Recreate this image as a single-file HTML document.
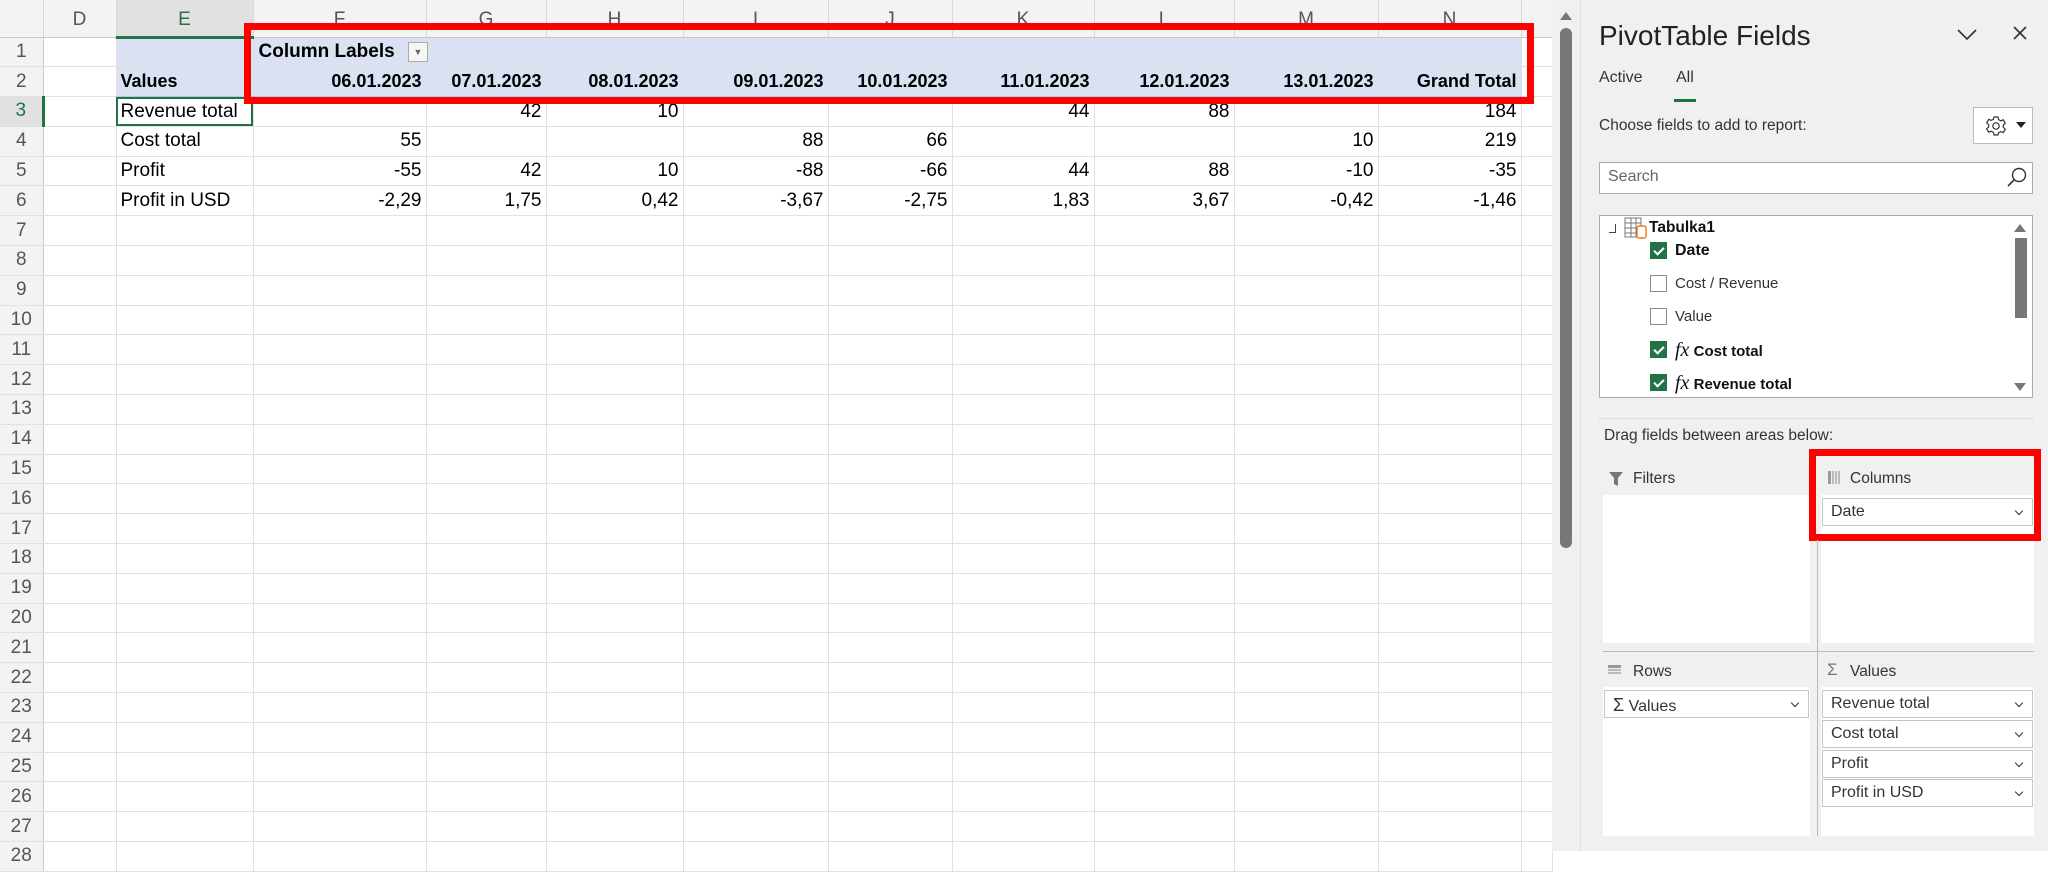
<!DOCTYPE html>
<html><head><meta charset="utf-8">
<style>
*{box-sizing:border-box;margin:0;padding:0}
body{width:2048px;height:851px;overflow:hidden;background:#fff;font-family:"Liberation Sans",sans-serif;position:relative}
table{border-collapse:collapse;table-layout:fixed;position:absolute;left:0;top:0;width:1552px}
td{border-right:1px solid #e1e1e1;border-bottom:1px solid #e1e1e1;height:29.8px;font-size:19px;color:#000;white-space:nowrap;overflow:visible;padding:0 4px;line-height:28px}
tr.h td{height:37px;background:#f3f3f3;color:#555;text-align:center;font-size:19px;border-bottom:1px solid #c8c8c8;border-right:1px solid #d8d8d8;vertical-align:top;padding-top:6px}
td.rh{background:#f3f3f3;color:#555;text-align:center;border-right:1px solid #c8c8c8;padding:0}
td.r{text-align:right}
.pv{background:#d9e1f2;border-right-color:#d9e1f2;font-weight:bold}
.pv2{background:#d9e1f2;border-right-color:#d9e1f2;font-weight:bold;border-bottom:2px solid #b4c6e7;font-size:18px}
.abs{position:absolute}
.panel{position:absolute;left:1580px;top:0;width:468px;height:851px;background:#f0f0f0;border-left:1px solid #ddd}
.pt{position:absolute;font-size:16px;color:#333}
.dd{position:absolute;background:#fff;border:1px solid #c6c6c6;height:28px;font-size:16px;color:#333;padding:4px 8px}
.dd:after{content:"";position:absolute;right:10px;top:9px;width:5px;height:5px;border-right:1.5px solid #333;border-bottom:1.5px solid #333;transform:rotate(45deg)}
.cb{position:absolute;width:17px;height:17px;border:1px solid #888;background:#fff}
.cb.on{background:#217346;border-color:#217346}
.cb.on:after{content:"";position:absolute;left:5px;top:2px;width:4px;height:8px;border-right:2px solid #fff;border-bottom:2px solid #fff;transform:rotate(45deg)}
</style></head><body>
<table>
<colgroup><col style="width:43px"><col style="width:73px"><col style="width:137px"><col style="width:173px"><col style="width:120px"><col style="width:137px"><col style="width:145px"><col style="width:124px"><col style="width:142px"><col style="width:140px"><col style="width:144px"><col style="width:143px"><col style="width:31px"></colgroup>
<tr class="h"><td style="background:#f3f3f3"></td><td>D</td><td style="background:#e1e1e1;color:#217346;border-bottom:3px solid #217346">E</td><td>F</td><td>G</td><td>H</td><td>I</td><td>J</td><td>K</td><td>L</td><td>M</td><td>N</td><td></td></tr>
<tr><td class="rh">1</td><td></td><td class="pv"></td><td class="pv" style="padding-left:5px">Column Labels <span style="display:inline-block;width:20px;height:20px;border:1px solid #aaa;background:#f6f6f6;vertical-align:middle;font-size:9px;text-align:center;line-height:18px;color:#666;margin-left:8px">▼</span></td><td class="pv"></td><td class="pv"></td><td class="pv"></td><td class="pv"></td><td class="pv"></td><td class="pv"></td><td class="pv"></td><td class="pv"></td><td></td></tr>
<tr><td class="rh">2</td><td></td><td class="pv2">Values</td><td class="pv2 r">06.01.2023</td><td class="pv2 r">07.01.2023</td><td class="pv2 r">08.01.2023</td><td class="pv2 r">09.01.2023</td><td class="pv2 r">10.01.2023</td><td class="pv2 r">11.01.2023</td><td class="pv2 r">12.01.2023</td><td class="pv2 r">13.01.2023</td><td class="pv2 r">Grand Total</td><td></td></tr>
<tr><td class="rh" style="background:#e1e1e1;color:#217346;border-right:3px solid #217346">3</td><td></td><td style="outline:2px solid #217346;outline-offset:-2px">Revenue total</td><td class="r"></td><td class="r">42</td><td class="r">10</td><td></td><td></td><td class="r">44</td><td class="r">88</td><td></td><td class="r">184</td><td></td></tr>
<tr><td class="rh">4</td><td></td><td>Cost total</td><td class="r">55</td><td></td><td></td><td class="r">88</td><td class="r">66</td><td></td><td></td><td class="r">10</td><td class="r">219</td><td></td></tr>
<tr><td class="rh">5</td><td></td><td>Profit</td><td class="r">-55</td><td class="r">42</td><td class="r">10</td><td class="r">-88</td><td class="r">-66</td><td class="r">44</td><td class="r">88</td><td class="r">-10</td><td class="r">-35</td><td></td></tr>
<tr><td class="rh">6</td><td></td><td>Profit in USD</td><td class="r">-2,29</td><td class="r">1,75</td><td class="r">0,42</td><td class="r">-3,67</td><td class="r">-2,75</td><td class="r">1,83</td><td class="r">3,67</td><td class="r">-0,42</td><td class="r">-1,46</td><td></td></tr>
<tr><td class="rh">7</td><td></td><td></td><td></td><td></td><td></td><td></td><td></td><td></td><td></td><td></td><td></td><td></td></tr>
<tr><td class="rh">8</td><td></td><td></td><td></td><td></td><td></td><td></td><td></td><td></td><td></td><td></td><td></td><td></td></tr>
<tr><td class="rh">9</td><td></td><td></td><td></td><td></td><td></td><td></td><td></td><td></td><td></td><td></td><td></td><td></td></tr>
<tr><td class="rh">10</td><td></td><td></td><td></td><td></td><td></td><td></td><td></td><td></td><td></td><td></td><td></td><td></td></tr>
<tr><td class="rh">11</td><td></td><td></td><td></td><td></td><td></td><td></td><td></td><td></td><td></td><td></td><td></td><td></td></tr>
<tr><td class="rh">12</td><td></td><td></td><td></td><td></td><td></td><td></td><td></td><td></td><td></td><td></td><td></td><td></td></tr>
<tr><td class="rh">13</td><td></td><td></td><td></td><td></td><td></td><td></td><td></td><td></td><td></td><td></td><td></td><td></td></tr>
<tr><td class="rh">14</td><td></td><td></td><td></td><td></td><td></td><td></td><td></td><td></td><td></td><td></td><td></td><td></td></tr>
<tr><td class="rh">15</td><td></td><td></td><td></td><td></td><td></td><td></td><td></td><td></td><td></td><td></td><td></td><td></td></tr>
<tr><td class="rh">16</td><td></td><td></td><td></td><td></td><td></td><td></td><td></td><td></td><td></td><td></td><td></td><td></td></tr>
<tr><td class="rh">17</td><td></td><td></td><td></td><td></td><td></td><td></td><td></td><td></td><td></td><td></td><td></td><td></td></tr>
<tr><td class="rh">18</td><td></td><td></td><td></td><td></td><td></td><td></td><td></td><td></td><td></td><td></td><td></td><td></td></tr>
<tr><td class="rh">19</td><td></td><td></td><td></td><td></td><td></td><td></td><td></td><td></td><td></td><td></td><td></td><td></td></tr>
<tr><td class="rh">20</td><td></td><td></td><td></td><td></td><td></td><td></td><td></td><td></td><td></td><td></td><td></td><td></td></tr>
<tr><td class="rh">21</td><td></td><td></td><td></td><td></td><td></td><td></td><td></td><td></td><td></td><td></td><td></td><td></td></tr>
<tr><td class="rh">22</td><td></td><td></td><td></td><td></td><td></td><td></td><td></td><td></td><td></td><td></td><td></td><td></td></tr>
<tr><td class="rh">23</td><td></td><td></td><td></td><td></td><td></td><td></td><td></td><td></td><td></td><td></td><td></td><td></td></tr>
<tr><td class="rh">24</td><td></td><td></td><td></td><td></td><td></td><td></td><td></td><td></td><td></td><td></td><td></td><td></td></tr>
<tr><td class="rh">25</td><td></td><td></td><td></td><td></td><td></td><td></td><td></td><td></td><td></td><td></td><td></td><td></td></tr>
<tr><td class="rh">26</td><td></td><td></td><td></td><td></td><td></td><td></td><td></td><td></td><td></td><td></td><td></td><td></td></tr>
<tr><td class="rh">27</td><td></td><td></td><td></td><td></td><td></td><td></td><td></td><td></td><td></td><td></td><td></td><td></td></tr>
<tr><td class="rh">28</td><td></td><td></td><td></td><td></td><td></td><td></td><td></td><td></td><td></td><td></td><td></td><td></td></tr>
</table>
<div class="abs" style="left:244px;top:23px;width:1290px;height:81px;border:7px solid #f00"></div>
<div class="abs" style="left:1552px;top:0;width:28px;height:851px;background:#f0f0f0"></div>
<div class="abs" style="left:1560px;top:12px;width:0;height:0;border-left:6px solid transparent;border-right:6px solid transparent;border-bottom:8px solid #777"></div>
<div class="abs" style="left:1560px;top:28px;width:12px;height:520px;background:#777;border-radius:6px"></div>
<div class="panel">
<div class="pt" style="left:18px;top:20px;font-size:28px;color:#222">PivotTable Fields</div>
<svg class="abs" style="left:375px;top:28px" width="22" height="14"><path d="M2 2 L11 11 L20 2" fill="none" stroke="#333" stroke-width="1.6"/></svg>
<svg class="abs" style="left:431px;top:25px" width="16" height="16"><path d="M2 2 L14 14 M14 2 L2 14" fill="none" stroke="#333" stroke-width="1.6"/></svg>
<div class="pt" style="left:18px;top:69px">Active</div>
<div class="pt" style="left:95px;top:69px">All</div>
<div class="abs" style="left:93px;top:99px;width:22px;height:3px;background:#217346"></div>
<div class="pt" style="left:18px;top:117px;font-size:15.5px">Choose fields to add to report:</div>
<div class="abs" style="left:392px;top:107px;width:60px;height:37px;background:#fff;border:1px solid #bbb"></div>
<svg class="abs" style="left:404px;top:115px" width="22" height="22" viewBox="0 0 22 22"><path d="M9 2h4l.6 2.6 2.2 1.2 2.5-1 2 3.4-2 1.8v2.4l2 1.8-2 3.4-2.5-1-2.2 1.2L13 20H9l-.6-2.6-2.2-1.2-2.5 1-2-3.4 2-1.8V9.6L1.7 7.8l2-3.4 2.5 1 2.2-1.2z" fill="none" stroke="#333" stroke-width="1.2"/><circle cx="11" cy="11" r="3.2" fill="none" stroke="#333" stroke-width="1.2"/></svg>
<div class="abs" style="left:435px;top:122px;border-left:5px solid transparent;border-right:5px solid transparent;border-top:6px solid #222"></div>
<div class="abs" style="left:18px;top:162px;width:434px;height:32px;background:#fff;border:1px solid #aaa"></div>
<div class="pt" style="left:27px;top:168px;color:#666">Search</div>
<svg class="abs" style="left:425px;top:166px" width="22" height="22"><circle cx="13" cy="9" r="6.5" fill="none" stroke="#333" stroke-width="1.4"/><path d="M8.5 13.5 L2 20" stroke="#333" stroke-width="1.6"/></svg>
<div class="abs" style="left:18px;top:215px;width:434px;height:183px;background:#fff;border:1px solid #aaa"></div>
<div class="abs" style="left:28px;top:224px;width:7px;height:9px;border-right:1.5px solid #444;border-bottom:1.5px solid #444"></div>
<svg class="abs" style="left:43px;top:217px" width="24" height="22"><rect x="1" y="1" width="16" height="19" fill="#fff" stroke="#777"/><path d="M1 6h16M1 11h16M1 16h16M7 1v19M12 1v19" stroke="#777"/><rect x="13" y="9" width="9" height="12" rx="2" fill="#fff" stroke="#e87722" stroke-width="1.4"/></svg>
<div class="pt" style="left:68px;top:219px;font-weight:bold;color:#111;font-size:15.5px">Tabulka1</div>
<div class="cb on" style="left:69px;top:242px"></div><div class="pt" style="left:94px;top:242px;font-weight:bold;color:#111">Date</div>
<div class="cb" style="left:69px;top:275px"></div><div class="pt" style="left:94px;top:275px;font-size:15px">Cost / Revenue</div>
<div class="cb" style="left:69px;top:308px"></div><div class="pt" style="left:94px;top:308px;font-size:15px">Value</div>
<div class="cb on" style="left:69px;top:341px"></div><div class="pt" style="left:94px;top:339px;font-weight:bold;color:#111;font-size:15px"><i style="font-family:'Liberation Serif',serif;font-size:20px;font-weight:normal">fx</i> Cost total</div>
<div class="cb on" style="left:69px;top:374px"></div><div class="pt" style="left:94px;top:372px;font-weight:bold;color:#111;font-size:15px"><i style="font-family:'Liberation Serif',serif;font-size:20px;font-weight:normal">fx</i> Revenue total</div>
<div class="abs" style="left:433px;top:224px;border-left:6px solid transparent;border-right:6px solid transparent;border-bottom:8px solid #777"></div>
<div class="abs" style="left:434px;top:238px;width:12px;height:80px;background:#777"></div>
<div class="abs" style="left:433px;top:383px;border-left:6px solid transparent;border-right:6px solid transparent;border-top:8px solid #777"></div>
<div class="abs" style="left:18px;top:418px;width:434px;border-top:1px dotted #ccc"></div>
<div class="pt" style="left:23px;top:427px;font-size:15.5px">Drag fields between areas below:</div>
<svg class="abs" style="left:27px;top:471px" width="16" height="16"><path d="M1 1h14l-5 6v8l-4-2V7z" fill="#777"/></svg>
<div class="pt" style="left:52px;top:470px;font-size:15.5px">Filters</div>
<div class="abs" style="left:22px;top:495px;width:207px;height:148px;background:#fff"></div>
<svg class="abs" style="left:247px;top:471px" width="14" height="14"><rect x="0" y="0" width="3" height="13" fill="#999"/><rect x="4" y="0" width="2" height="13" fill="#bbb"/><rect x="7" y="0" width="2" height="13" fill="#bbb"/><rect x="10" y="0" width="2" height="13" fill="#bbb"/></svg>
<div class="pt" style="left:269px;top:470px;font-size:15.5px">Columns</div>
<div class="abs" style="left:240px;top:495px;width:213px;height:148px;background:#fff"></div>
<div class="dd" style="left:241px;top:498px;width:211px">Date</div>
<div class="abs" style="left:228px;top:449px;width:232px;height:92px;border:7px solid #f00"></div>
<div class="abs" style="left:22px;top:651px;width:431px;border-top:1px solid #bbb"></div>
<div class="abs" style="left:236px;top:540px;height:296px;border-left:1.5px solid #bbb"></div>
<svg class="abs" style="left:27px;top:665px" width="14" height="12"><rect x="0" y="0" width="13" height="3" fill="#999"/><rect x="0" y="4" width="13" height="2" fill="#bbb"/><rect x="0" y="7" width="13" height="2" fill="#bbb"/></svg>
<div class="pt" style="left:52px;top:663px;font-size:15.5px">Rows</div>
<div class="abs" style="left:22px;top:687px;width:207px;height:149px;background:#fff"></div>
<div class="dd" style="left:23px;top:690px;width:205px"><span style="font-size:18px">Σ</span> Values</div>
<div class="pt" style="left:246px;top:660px;font-size:17px;color:#777">Σ</div>
<div class="pt" style="left:269px;top:663px;font-size:15.5px">Values</div>
<div class="abs" style="left:240px;top:687px;width:213px;height:149px;background:#fff"></div>
<div class="dd" style="left:241px;top:690px;width:211px">Revenue total</div>
<div class="dd" style="left:241px;top:720px;width:211px">Cost total</div>
<div class="dd" style="left:241px;top:750px;width:211px">Profit</div>
<div class="dd" style="left:241px;top:779px;width:211px">Profit in USD</div>
</div>
</body></html>
